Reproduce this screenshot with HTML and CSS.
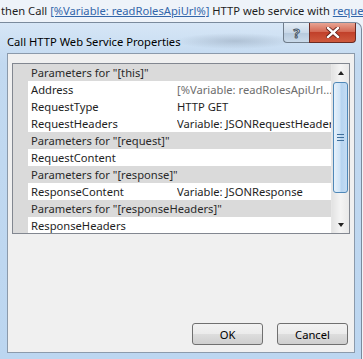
FILE: index.html
```html
<!DOCTYPE html>
<html lang="en">
  <head>
    <title>Call HTTP Web Service Properties</title>
    <meta charset="utf-8">
    <link rel="stylesheet" href="styles.css">
  </head>
  <body>

  <div class="behind">
    then Call <span class="link">[%Variable: readRolesApiUrl%]</span> HTTP web service with <span class="link">request</span>
  </div>

  <div class="window">
    <div class="titlebar">
      <span class="title">Call HTTP Web Service Properties</span>
      <div class="caption-buttons">
        <span class="cap help">?</span>
        <span class="cap close">
          <svg width="14" height="11" viewBox="0 0 14 11">
            <path d="M2 1 L12 10 M12 1 L2 10" stroke="#5a1a14" stroke-width="4" stroke-linecap="square"/>
            <path d="M2 1 L12 10 M12 1 L2 10" stroke="#ffffff" stroke-width="2.4" stroke-linecap="square"/>
          </svg>
        </span>
      </div>
    </div>

    <div class="client">
      <div class="grid">
        <div class="rows">
          <div class="row head">Parameters for "[this]"</div>
          <div class="row"><span class="name">Address</span><span class="value muted">[%Variable: readRolesApiUrl...</span></div>
          <div class="row"><span class="name">RequestType</span><span class="value">HTTP GET</span></div>
          <div class="row"><span class="name">RequestHeaders</span><span class="value">Variable: JSONRequestHeader</span></div>
          <div class="row head">Parameters for "[request]"</div>
          <div class="row"><span class="name">RequestContent</span><span class="value"></span></div>
          <div class="row head">Parameters for "[response]"</div>
          <div class="row"><span class="name">ResponseContent</span><span class="value">Variable: JSONResponse</span></div>
          <div class="row head">Parameters for "[responseHeaders]"</div>
          <div class="row"><span class="name">ResponseHeaders</span><span class="value"></span></div>
        </div>
        <div class="scrollbar">
          <div class="arrow up"></div>
          <div class="track">
            <div class="thumb"><span class="grip"></span></div>
          </div>
          <div class="arrow down"></div>
        </div>
      </div>

      <div class="buttons">
        <button class="btn">OK</button>
        <button class="btn">Cancel</button>
      </div>
    </div>
  </div>

  </body>
</html>
```

FILE: styles.css
```css
html {
  height: 100%;
}
body {
  margin: 0;
  padding: 0;
  width: 363px;
  height: 359px;
  overflow: hidden;
  background: #eef3f9;
  color: #1e1e1e;
  font-family: "Noto Sans", "Open Sans", sans-serif;
  font-size: 11.2px;
}

.behind {
  height: 22px;
  line-height: 22px;
  padding-left: 1px;
  white-space: nowrap;
  overflow: hidden;
}

.link {
  color: #3366aa;
  text-decoration: underline;
}

.window {
  width: 361px;
  height: 336px;
  display: flex;
  flex-direction: column;
  background:
    radial-gradient(ellipse 60px 8px at 235px 18px, rgba(120,135,155,0.35), rgba(120,135,155,0) 100%),
    linear-gradient(180deg, #d6e6f6 0%, #c2d9f0 12%, #bcd6f0 100%);
  border-top: 1px solid #7a8a9c;
  border-right: 1px solid #7a8a9c;
  border-radius: 0 7px 0 0;
}

.titlebar {
  height: 30px;
  display: flex;
  align-items: center;
  padding-left: 7px;
  position: relative;
}

.title {
  color: #000;
  padding-top: 6px;
}

.caption-buttons {
  position: absolute;
  top: 0;
  right: 5px;
  display: flex;
}

.cap {
  height: 19px;
  display: flex;
  align-items: center;
  justify-content: center;
  border: 1px solid #6f7c8a;
  border-top: none;
}
.help {
  width: 25px;
  border-radius: 0 0 0 4px;
  background: linear-gradient(180deg, #e4edf6 0%, #c9d8e8 50%, #b5c8dc 51%, #cadaea 100%);
  color: #eef3f8;
  font-weight: bold;
  font-size: 13px;
  -webkit-text-stroke: 1px #4a5868;
  border-right: none;
}
.close {
  width: 45px;
  border-radius: 0 0 4px 0;
  background: linear-gradient(180deg, #e8a493 0%, #d46a55 45%, #c1402a 50%, #cf5a3e 100%);
  border-color: #6b2a22;
}

.client {
  flex: 1;
  display: flex;
  flex-direction: column;
  margin: 0 6px 6px 7px;
  background: #f0f0f0;
  border: 1px solid #8b9aab;
  padding: 9px 4px 7px 4px;
}

.grid {
  height: 169px;
  display: flex;
  border: 1px solid #828790;
  background: #fff;
}

.rows {
  flex: 1;
  overflow: hidden;
}

.row {
  height: 17px;
  line-height: 17px;
  display: flex;
  white-space: nowrap;
  background: #fff;
  border-left: 15px solid #dadada;
}
.row.head {
  background: #dadada;
  padding-left: 3px;
  color: #2a2a2a;
}

.name {
  width: 146px;
  padding-left: 3px;
  flex-shrink: 0;
}
.value {
  flex: 1;
  overflow: hidden;
}
.muted {
  color: #6d6d6d;
}

.scrollbar {
  width: 17px;
  display: flex;
  flex-direction: column;
  background: linear-gradient(90deg, #e3e3e3 0%, #f4f4f4 50%, #e9e9e9 100%);
  border-left: 1px solid #e6e6e6;
}
.arrow {
  height: 17px;
  display: flex;
  align-items: center;
  justify-content: center;
}
.arrow::after {
  content: "";
  border-left: 3px solid transparent;
  border-right: 3px solid transparent;
}
.arrow.up::after {
  border-bottom: 4px solid #222;
}
.arrow.down::after {
  border-top: 4px solid #222;
}
.track {
  flex: 1;
  padding-top: 1px;
}
.thumb {
  height: 109px;
  margin: 0 1px;
  border: 1px solid #4f88b8;
  border-radius: 3px;
  background: linear-gradient(90deg, #e6f1fb 0%, #cfe4f7 45%, #b6d4f0 55%, #c4dcf3 100%);
  display: flex;
  align-items: center;
  justify-content: center;
}
.grip {
  width: 7px;
  height: 5px;
  border-top: 1px solid #3f6f9c;
  border-bottom: 1px solid #3f6f9c;
  position: relative;
}
.grip::after {
  content: "";
  position: absolute;
  left: 0;
  right: 0;
  top: 2px;
  border-top: 1px solid #3f6f9c;
}

.buttons {
  margin-top: auto;
  display: flex;
  justify-content: flex-end;
  gap: 14px;
  padding-right: 2px;
}

.btn {
  width: 71px;
  height: 22px;
  font-family: "Noto Sans", "Open Sans", sans-serif;
  font-size: 11.2px;
  color: #000;
  border: 1px solid #707070;
  border-radius: 3px;
  background: linear-gradient(180deg, #f2f2f2 0%, #ebebeb 49%, #dddddd 50%, #cfcfcf 100%);
  padding: 0;
}
```
